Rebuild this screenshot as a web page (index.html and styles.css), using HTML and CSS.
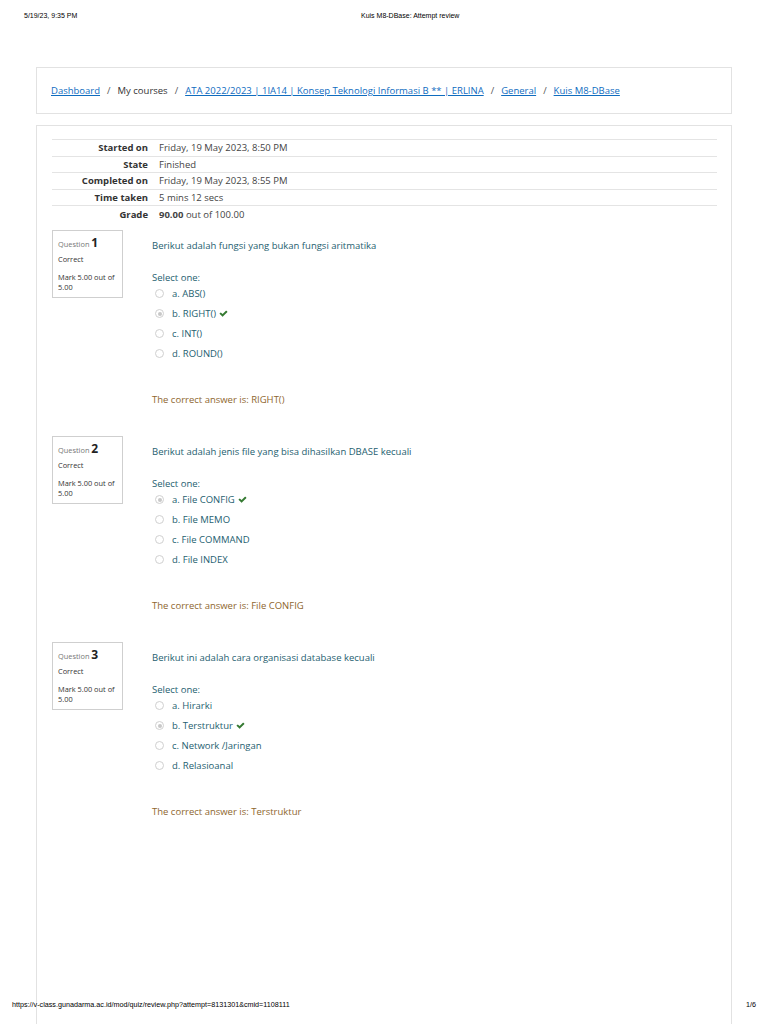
FILE: index.html
```html
<!DOCTYPE html>
<html lang="en">
<head>
  <meta charset="UTF-8" />
  <title>Kuis M8-DBase: Attempt review</title>
  <link rel="stylesheet" href="styles.css">
</head>
<body>
  <div class="print-header">
    <span class="print-date">5/19/23, 9:35 PM</span>
    <span class="print-title">Kuis M8-DBase: Attempt review</span>
  </div>

  <div class="page">
    <nav class="breadcrumb-box">
      <a href="#">Dashboard</a><span class="sep">/</span>
      <span>My courses</span><span class="sep">/</span>
      <a href="#">ATA 2022/2023 | 1IA14 | Konsep Teknologi Informasi B ** | ERLINA</a><span class="sep">/</span>
      <a href="#">General</a><span class="sep">/</span>
      <a href="#">Kuis M8-DBase</a>
    </nav>

    <div class="main-box">
      <table class="summary">
        <tr><th>Started on</th><td>Friday, 19 May 2023, 8:50 PM</td></tr>
        <tr><th>State</th><td>Finished</td></tr>
        <tr><th>Completed on</th><td>Friday, 19 May 2023, 8:55 PM</td></tr>
        <tr><th>Time taken</th><td>5 mins 12 secs</td></tr>
        <tr><th>Grade</th><td><b>90.00</b> out of 100.00</td></tr>
      </table>

      <!-- Question 1 -->
      <div class="que">
        <div class="info">
          <div class="qno"><span class="qword">Question</span> <b>1</b></div>
          <div class="state">Correct</div>
          <div class="grade">Mark 5.00 out of 5.00</div>
        </div>
        <div class="content">
          <div class="qtext">Berikut adalah fungsi yang bukan fungsi aritmatika</div>
          <div class="prompt">Select one:</div>
          <div class="answer">
            <div class="opt"><span class="radio"></span>a. ABS()</div>
            <div class="opt"><span class="radio checked"></span>b. RIGHT() <svg class="tick" viewBox="0 0 1792 1792"><path d="M1671 566q0 40-28 68l-724 724-136 136q-28 28-68 28t-68-28l-136-136-362-362q-28-28-28-68t28-68l136-136q28-28 68-28t68 28l294 295 656-657q28-28 68-28t68 28l136 136q28 28 28 68z"/></svg></div>
            <div class="opt"><span class="radio"></span>c. INT()</div>
            <div class="opt"><span class="radio"></span>d. ROUND()</div>
          </div>
          <div class="rightanswer">The correct answer is: RIGHT()</div>
        </div>
      </div>

      <!-- Question 2 -->
      <div class="que">
        <div class="info">
          <div class="qno"><span class="qword">Question</span> <b>2</b></div>
          <div class="state">Correct</div>
          <div class="grade">Mark 5.00 out of 5.00</div>
        </div>
        <div class="content">
          <div class="qtext">Berikut adalah jenis file yang bisa dihasilkan DBASE kecuali</div>
          <div class="prompt">Select one:</div>
          <div class="answer">
            <div class="opt"><span class="radio checked"></span>a. File CONFIG <svg class="tick" viewBox="0 0 1792 1792"><path d="M1671 566q0 40-28 68l-724 724-136 136q-28 28-68 28t-68-28l-136-136-362-362q-28-28-28-68t28-68l136-136q28-28 68-28t68 28l294 295 656-657q28-28 68-28t68 28l136 136q28 28 28 68z"/></svg></div>
            <div class="opt"><span class="radio"></span>b. File MEMO</div>
            <div class="opt"><span class="radio"></span>c. File COMMAND</div>
            <div class="opt"><span class="radio"></span>d. File INDEX</div>
          </div>
          <div class="rightanswer">The correct answer is: File CONFIG</div>
        </div>
      </div>

      <!-- Question 3 -->
      <div class="que">
        <div class="info">
          <div class="qno"><span class="qword">Question</span> <b>3</b></div>
          <div class="state">Correct</div>
          <div class="grade">Mark 5.00 out of 5.00</div>
        </div>
        <div class="content">
          <div class="qtext">Berikut ini adalah cara organisasi database kecuali</div>
          <div class="prompt">Select one:</div>
          <div class="answer">
            <div class="opt"><span class="radio"></span>a. Hirarki</div>
            <div class="opt"><span class="radio checked"></span>b. Terstruktur <svg class="tick" viewBox="0 0 1792 1792"><path d="M1671 566q0 40-28 68l-724 724-136 136q-28 28-68 28t-68-28l-136-136-362-362q-28-28-28-68t28-68l136-136q28-28 68-28t68 28l294 295 656-657q28-28 68-28t68 28l136 136q28 28 28 68z"/></svg></div>
            <div class="opt"><span class="radio"></span>c. Network /Jaringan</div>
            <div class="opt"><span class="radio"></span>d. Relasioanal</div>
          </div>
          <div class="rightanswer">The correct answer is: Terstruktur</div>
        </div>
      </div>
    </div>
  </div>

  <div class="print-footer">
    <span>https://v-class.gunadarma.ac.id/mod/quiz/review.php?attempt=8131301&amp;cmid=1108111</span>
    <span>1/6</span>
  </div>
</body>
</html>
```

FILE: styles.css
```css
html, body {
    margin: 0;
    padding: 0;
    height: 1024px;
    overflow: hidden;
}

body {
    font-family: "Open Sans", "Noto Sans", sans-serif;
    font-size: 9.5px;
    color: #333;
    background: #fff;
}

/* 印刷ヘッダー / フッター */
.print-header {
    display: flex;
    font-family: "Liberation Sans", Arial, sans-serif;
    font-size: 7px;
    color: #000;
    padding: 12px 0 0 24px;
    height: 8px;
    line-height: 8px;
}
.print-date {
    width: 337px;
}

.print-footer {
    position: absolute;
    left: 12px;
    right: 12px;
    top: 1001px;
    display: flex;
    justify-content: space-between;
    font-family: "Liberation Sans", Arial, sans-serif;
    font-size: 7.2px;
    line-height: 8px;
    color: #000;
}

.page {
    padding: 47px 36px 0 36px;
}

/* パンくず */
.breadcrumb-box {
    border: 1px solid #e2e2e2;
    height: 45px;
    display: flex;
    align-items: center;
    padding: 0 14px;
    color: #333;
    white-space: nowrap;
}
.breadcrumb-box a {
    color: #0f6cbf;
    text-decoration: underline;
}
.breadcrumb-box .sep {
    margin: 0 7px;
    color: #555;
}

.main-box {
    margin-top: 11px;
    border: 1px solid #e2e2e2;
    height: 920px;
    padding: 13px 14px 0 15px;
}

/* 受験サマリー */
.summary {
    width: 100%;
    border-collapse: collapse;
}
.summary th,
.summary td {
    border-top: 1px solid #e4e4e4;
    height: 15.6px;
    padding: 0;
    line-height: 15px;
}
.summary th {
    width: 96px;
    text-align: right;
    font-weight: 700;
    color: #333;
}
.summary td {
    padding-left: 11px;
    color: #444;
}

/* 問題ブロック */
.que {
    display: flex;
    margin-top: 8px;
    margin-bottom: 29px;
}
.que + .que {
    margin-top: 0;
}

.info {
    width: 59px;
    height: 62px;
    border: 1px solid #cfcfcf;
    padding: 4px 5px 0 5px;
    flex-shrink: 0;
    font-size: 7.4px;
    line-height: 10px;
    color: #333;
}
.info .qno {
    line-height: 16px;
}
.info .qword {
    color: #777;
}
.info .qno b {
    font-size: 12px;
    color: #222;
}
.info .state {
    margin-top: 2px;
    margin-bottom: 8px;
}

.content {
    margin-left: 29px;
    padding-top: 9px;
    color: #25606f;
}
.qtext {
    line-height: 14px;
    margin-bottom: 18px;
}
.prompt {
    line-height: 13px;
}
.opt {
    display: flex;
    align-items: center;
    height: 20px;
}
.radio {
    width: 7px;
    height: 7px;
    border: 1px solid #d0d0d0;
    border-radius: 50%;
    margin: 0 8px 0 3px;
    position: relative;
    background: #fff;
}
.radio.checked::after {
    content: "";
    position: absolute;
    left: 1.5px;
    top: 1.5px;
    width: 4px;
    height: 4px;
    border-radius: 50%;
    background: #c8c8c8;
}
.tick {
    width: 9px;
    height: 9px;
    fill: #357a32;
    margin-left: 3px;
}
.rightanswer {
    margin-top: 29px;
    line-height: 14px;
    color: #8e662e;
}
```
